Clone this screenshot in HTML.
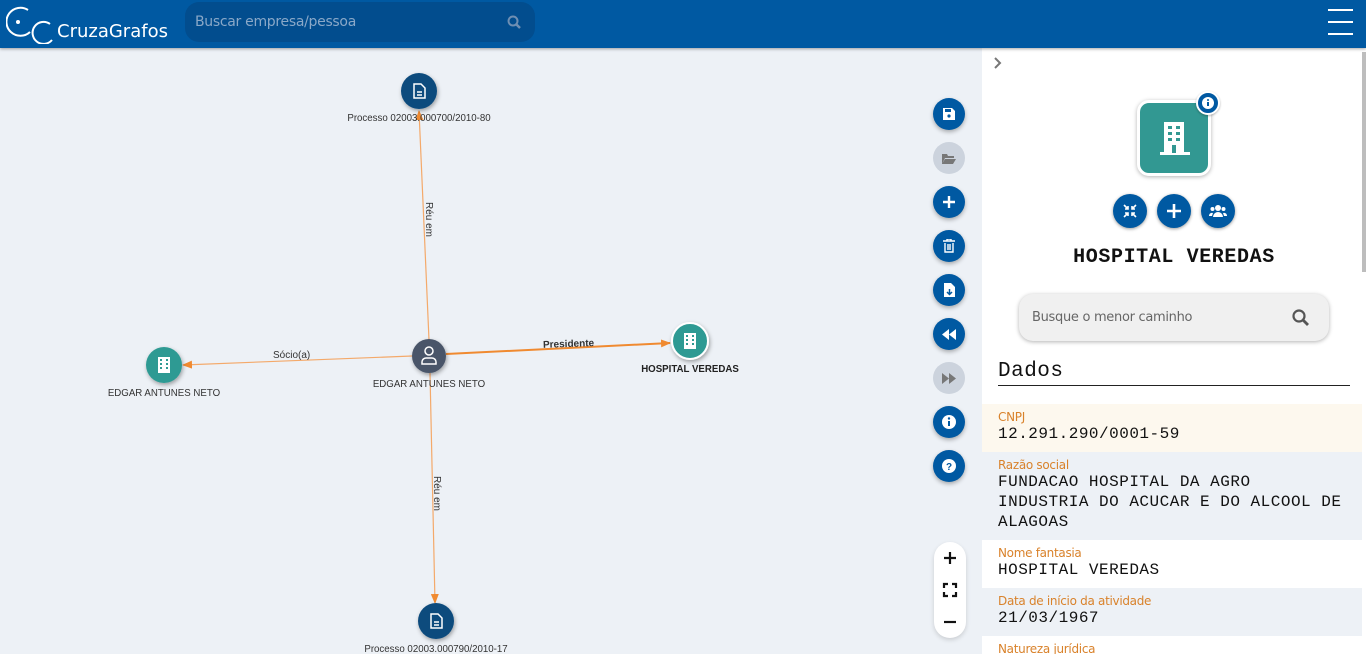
<!DOCTYPE html>
<html><head><meta charset="utf-8"><style>
*{margin:0;padding:0;box-sizing:border-box}
html,body{width:1366px;height:654px;overflow:hidden}
body{background:#edf1f6;font-family:"Liberation Sans",sans-serif;position:relative}
.hdr{position:absolute;left:0;top:0;width:1366px;height:48px;background:#0059a2;box-shadow:0 1px 3px rgba(0,0,0,.35);z-index:5}
.logo{position:absolute;left:57px;top:21px;color:#fff;font-family:"DejaVu Sans",sans-serif;font-size:18px}
.srch{position:absolute;left:185px;top:2px;width:350px;height:40px;background:#024d8e;border-radius:14px}
.srch span{position:absolute;left:10px;top:12px;color:#8aa8c8;font-size:14px;font-family:"DejaVu Sans",sans-serif;letter-spacing:-.3px}
.burger{position:absolute;left:1328px;width:25px;height:2px;background:#fff}
.btn{position:absolute;left:933px;width:32px;height:32px;border-radius:50%;background:#0059a2;box-shadow:0 2px 4px rgba(0,0,0,.3);display:flex;align-items:center;justify-content:center}
.btn.dis{background:#ccd3dd;box-shadow:none}
.panel{position:absolute;left:982px;top:48px;width:384px;height:606px;background:#fff;overflow:hidden}
.mono{font-family:"Liberation Mono",monospace}
.row{position:absolute;left:0;width:380px;padding-left:16px}
.lab{color:#d9822b;font-size:12px;font-family:"DejaVu Sans",sans-serif;letter-spacing:-.3px;line-height:14px}
.val{font-family:"Liberation Mono",monospace;font-size:16px;color:#111;line-height:20px;letter-spacing:.5px}
.cb{position:absolute;width:34px;height:34px;border-radius:50%;background:#0059a2;box-shadow:0 1px 3px rgba(0,0,0,.4);display:flex;align-items:center;justify-content:center}
</style></head><body>
<div class="hdr">
<svg style="position:absolute;left:6px;top:4px" width="50" height="40"><path d="M22 6 A14 14 0 1 0 24 28" fill="none" stroke="#fff" stroke-width="2"/><circle cx="12" cy="18" r="2" fill="#fff"/><path d="M44 20 A11 11 0 1 0 46 36" fill="none" stroke="#fff" stroke-width="2"/></svg>
<div class="logo">CruzaGrafos</div>
<div class="srch"><span>Buscar empresa/pessoa</span>
<svg style="position:absolute;left:322px;top:13px" width="14" height="14"><circle cx="6" cy="6" r="4.5" stroke="#6f8fb3" stroke-width="2" fill="none"/><path d="M9.5 9.5 13 13" stroke="#6f8fb3" stroke-width="2.5"/></svg></div>
<div class="burger" style="top:9px"></div><div class="burger" style="top:21px"></div><div class="burger" style="top:33px"></div>
</div>

<svg style="position:absolute;left:0;top:48px" width="982" height="606" font-family="Liberation Sans" >
<defs><marker id="a" markerWidth="10" markerHeight="8" refX="9" refY="4" orient="auto" markerUnits="userSpaceOnUse"><path d="M0 0 10 4 0 8z" fill="#f08a30"/></marker>
<filter id="s"><feDropShadow dx="1" dy="2" stdDeviation="2" flood-opacity=".35"/></filter></defs>
<g stroke="#f4a96a" stroke-width="1.2">
<line x1="429" y1="292" x2="419" y2="63" marker-end="url(#a)"/>
<line x1="412" y1="308" x2="183" y2="317" marker-end="url(#a)"/>
<line x1="430" y1="325" x2="435" y2="555" marker-end="url(#a)"/>
</g>
<line x1="446" y1="306" x2="670" y2="295" stroke="#f08a30" stroke-width="2" marker-end="url(#a)"/>
<g font-size="10" fill="#333">
<text transform="translate(426,154) rotate(90)">Réu em</text>
<text x="273" y="310">Sócio(a)</text>
<text x="543" y="299" font-weight="bold" transform="rotate(-2 567 296)">Presidente</text>
<text transform="translate(434,428) rotate(90)">Réu em</text>
</g>
<g filter="url(#s)">
<circle cx="419" cy="43" r="18" fill="#0d4b7d"/>
<circle cx="436" cy="573" r="18" fill="#0d4b7d"/>
<circle cx="429" cy="308" r="17" fill="#495569"/>
<circle cx="690" cy="293" r="18" fill="#2f9a93" stroke="#fff" stroke-width="2"/>
<circle cx="164" cy="317" r="18" fill="#2f9a93"/>
</g>
<g fill="none" stroke="#fff" stroke-width="1.5">
<path d="M414 36h7l4 4v10h-11z M417 44h5 M417 47h5"/>
<path d="M431 566h7l4 4v10h-11z M434 574h5 M434 577h5"/>
<circle cx="429" cy="303" r="4"/><path d="M422 316v-2a4 4 0 0 1 4-4h6a4 4 0 0 1 4 4v2z"/>
</g>
<g fill="#fff"><rect x="684" y="285" width="12" height="16"/><rect x="158" y="309" width="12" height="16"/></g>
<g fill="#2f9a93"><rect x="686" y="287" width="2" height="2"/><rect x="692" y="287" width="2" height="2"/><rect x="686" y="291" width="2" height="2"/><rect x="692" y="291" width="2" height="2"/><rect x="686" y="295" width="2" height="2"/><rect x="692" y="295" width="2" height="2"/>
<rect x="160" y="311" width="2" height="2"/><rect x="166" y="311" width="2" height="2"/><rect x="160" y="315" width="2" height="2"/><rect x="166" y="315" width="2" height="2"/><rect x="160" y="319" width="2" height="2"/><rect x="166" y="319" width="2" height="2"/></g>
<g font-size="9.7" fill="#333" text-anchor="middle">
<text x="419" y="73">Processo 02003.000700/2010-80</text>
<text x="436" y="604">Processo 02003.000790/2010-17</text>
<text x="429" y="339">EDGAR ANTUNES NETO</text>
<text x="164" y="348">EDGAR ANTUNES NETO</text>
<text x="690" y="324" font-weight="bold" fill="#222">HOSPITAL VEREDAS</text>
</g>
</svg>

<div class="btn" style="top:98px"><svg width="12" height="12"><path d="M0 0h9l3 3v9H0z" fill="#fff"/><rect x="2" y="1" width="6" height="3" fill="#0059a2"/><circle cx="6" cy="8" r="1.6" fill="#0059a2"/></svg></div>
<div class="btn dis" style="top:142px"><svg width="14" height="11"><path d="M0 1h5l1 2h6v2H3L0 11z M3 6h11l-3 5H0z" fill="#777"/></svg></div>
<div class="btn" style="top:186px"><svg width="12" height="12"><path d="M6 0v12M0 6h12" stroke="#fff" stroke-width="2.4"/></svg></div>
<div class="btn" style="top:230px"><svg width="12" height="14"><path d="M0 2h12M4 2V0h4v2M2 4v9h8V4M5 5v6M7 5v6" stroke="#fff" stroke-width="1.4" fill="none"/></svg></div>
<div class="btn" style="top:274px"><svg width="11" height="14"><path d="M0 0h7l4 4v10H0z" fill="#fff"/><path d="M5.5 6v5M3 9l2.5 2.5L8 9" stroke="#0059a2" stroke-width="1.5" fill="none"/></svg></div>
<div class="btn" style="top:318px"><svg width="14" height="11"><path d="M7 0v11L0 5.5zM14 0v11L7 5.5z" fill="#fff"/></svg></div>
<div class="btn dis" style="top:362px"><svg width="14" height="11"><path d="M0 0v11l7-5.5zM7 0v11l7-5.5z" fill="#777"/></svg></div>
<div class="btn" style="top:406px"><svg width="14" height="14"><circle cx="7" cy="7" r="7" fill="#fff"/><path d="M7 6v5" stroke="#0059a2" stroke-width="2"/><circle cx="7" cy="3.5" r="1.2" fill="#0059a2"/></svg></div>
<div class="btn" style="top:450px"><svg width="14" height="14"><circle cx="7" cy="7" r="7" fill="#fff"/><text x="7" y="11" font-size="10" font-weight="bold" text-anchor="middle" fill="#0059a2" font-family="Liberation Sans">?</text></svg></div>
<div style="position:absolute;left:934px;top:542px;width:32px;height:96px;background:#fff;border-radius:16px;box-shadow:0 2px 5px rgba(0,0,0,.15)">
<svg width="32" height="96"><path d="M16 10v12M10 16h12" stroke="#111" stroke-width="2.2"/><path d="M10 46v-4h4M18 42h4v4M22 50v4h-4M14 54h-4v-4" stroke="#111" stroke-width="2.2" fill="none"/><path d="M10 80h12" stroke="#111" stroke-width="2.2"/></svg></div>

<div class="panel">
<div style="position:absolute;right:0;top:4px;width:4px;height:220px;background:#bdbdbd"></div>
<svg style="position:absolute;left:11px;top:9px" width="10" height="12"><path d="M2 1l5 5-5 5" stroke="#777" stroke-width="2" fill="none"/></svg>
<div style="position:absolute;left:155px;top:52px;width:74px;height:76px;border-radius:12px;background:#329892;border:3px solid #fff;box-shadow:0 1px 4px rgba(0,0,0,.3)">
<svg style="position:absolute;left:20px;top:19px" width="30" height="33"><rect x="4" y="0" width="20" height="32" fill="#fff"/><rect x="0" y="30" width="30" height="3" fill="#fff"/><g fill="#329892"><rect x="8" y="4" width="4" height="3"/><rect x="16" y="4" width="4" height="3"/><rect x="8" y="10" width="4" height="3"/><rect x="16" y="10" width="4" height="3"/><rect x="8" y="16" width="4" height="3"/><rect x="16" y="16" width="4" height="3"/><rect x="12" y="23" width="4" height="8"/></g></svg></div>
<div style="position:absolute;left:214px;top:43px;width:24px;height:24px;border-radius:50%;background:#0059a2;border:2px solid #fff;box-shadow:0 1px 2px rgba(0,0,0,.3)"><svg width="20" height="20"><circle cx="10" cy="10" r="6" fill="#fff"/><path d="M10 9v4" stroke="#0059a2" stroke-width="2"/><circle cx="10" cy="7" r="1" fill="#0059a2"/></svg></div>
<div class="cb" style="left:131px;top:146px"><svg width="14" height="14" stroke="#fff" stroke-width="1.6" fill="none"><path d="M1 1l4 4M5 2v3H2M13 1l-4 4M9 2v3h3M1 13l4-4M2 9h3v3M13 13l-4-4M12 9H9v3"/></svg></div>
<div class="cb" style="left:175px;top:146px"><svg width="14" height="14"><path d="M7 0v14M0 7h14" stroke="#fff" stroke-width="2.6"/></svg></div>
<div class="cb" style="left:219px;top:146px"><svg width="18" height="12" fill="#fff"><circle cx="9" cy="3" r="3"/><circle cx="3.5" cy="4" r="2"/><circle cx="14.5" cy="4" r="2"/><path d="M4 12a5 5 0 0 1 10 0zM0 11a3 3 0 0 1 4-3l-1 3zM18 11a3 3 0 0 0-4-3l1 3z"/></svg></div>
<div class="mono" style="position:absolute;left:0;width:384px;top:198px;text-align:center;font-size:20px;font-weight:bold;color:#111;letter-spacing:.6px">HOSPITAL VEREDAS</div>
<div style="position:absolute;left:37px;top:246px;width:310px;height:47px;border-radius:14px;background:#f0f0f0;box-shadow:0 1px 4px rgba(0,0,0,.3)"><span style="position:absolute;left:13px;top:16px;font-size:13px;color:#666;font-family:'DejaVu Sans',sans-serif;letter-spacing:-.3px">Busque o menor caminho</span>
<svg style="position:absolute;left:273px;top:15px" width="17" height="17"><circle cx="7" cy="7" r="5.5" stroke="#555" stroke-width="2.2" fill="none"/><path d="M11 11 16 16" stroke="#555" stroke-width="2.8"/></svg></div>
<div class="mono" style="position:absolute;left:16px;top:312px;font-size:21px;color:#111;letter-spacing:.5px">Dados</div>
<div style="position:absolute;left:16px;top:337px;width:352px;height:1px;background:#222"></div>
<div class="row" style="top:356px;height:48px;background:#fdf8ee;padding-top:6px"><div class="lab">CNPJ</div><div class="val">12.291.290/0001-59</div></div>
<div class="row" style="top:404px;height:88px;background:#edf1f6;padding-top:6px"><div class="lab">Razão social</div><div class="val">FUNDACAO HOSPITAL DA AGRO<br>INDUSTRIA DO ACUCAR E DO ALCOOL DE<br>ALAGOAS</div></div>
<div class="row" style="top:492px;height:48px;background:#fff;padding-top:6px"><div class="lab">Nome fantasia</div><div class="val">HOSPITAL VEREDAS</div></div>
<div class="row" style="top:540px;height:48px;background:#edf1f6;padding-top:6px"><div class="lab">Data de início da atividade</div><div class="val">21/03/1967</div></div>
<div class="row" style="top:588px;height:48px;background:#fff;padding-top:6px"><div class="lab">Natureza jurídica</div></div>
</div>
</body></html>
